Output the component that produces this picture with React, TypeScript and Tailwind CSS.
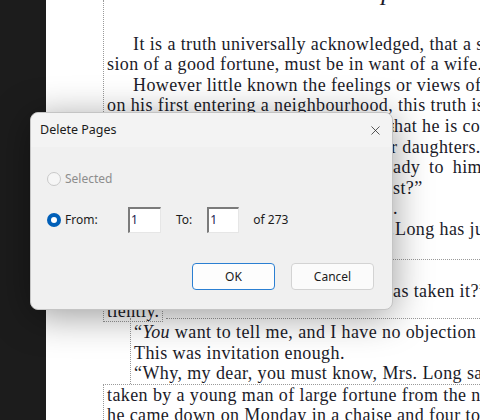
import { X } from "lucide-react";

const serif = "font-['Liberation_Serif',serif]";
const line = "h-[20.6px] leading-[20.6px] whitespace-nowrap";
const hid = "inline-block align-top overflow-hidden whitespace-nowrap";

function Radio(props: { checked?: boolean; disabled?: boolean }) {
  if (props.checked) {
    return (
      <span className="flex h-[14px] w-[14px] items-center justify-center rounded-full bg-[#005fb8]">
        <span className="h-[6px] w-[6px] rounded-full bg-white" />
      </span>
    );
  }
  return (
    <span
      className={
        "h-[14px] w-[14px] rounded-full border " +
        (props.disabled ? "border-[#c9c9c9] bg-[#f6f6f6]" : "border-[#8a8a8a] bg-white")
      }
    />
  );
}

function PageInput(props: { value: string; width: string }) {
  return (
    <div
      className={
        props.width +
        " h-[26px] border-t-2 border-l-2 border-r border-b border-t-[#7b7b7b] border-l-[#7b7b7b] border-r-[#e6e6e6] border-b-[#e6e6e6] bg-white pl-[1px] text-[12px] leading-[22px] text-[#1c2450]"
      }
    >
      {props.value}
    </div>
  );
}

function DeletePagesDialog() {
  return (
    <div className="absolute left-[30px] top-[112px] flex h-[198px] w-[363px] flex-col rounded-lg border border-[#c4c4c4] bg-[#f0f0f0] font-['Noto_Sans',sans-serif] text-[#1b1b1b] shadow-[0_6px_38px_rgba(0,0,0,0.4)]">
      <div className="flex h-[34px] items-center justify-between rounded-t-lg bg-[#f3f3f3] pl-[9px]">
        <span className="text-[12.5px]">Delete Pages</span>
        <button className="flex h-[34px] w-[34px] items-center justify-center text-[#222]">
          <X size={15} strokeWidth={1.2} />
        </button>
      </div>

      <div className="flex flex-col px-[16px] pt-[22px] text-[12px]">
        <div className="flex h-[20px] items-center gap-[4px] text-[#8d8d8d]">
          <Radio disabled />
          <span>Selected</span>
        </div>

        <div className="mt-[18px] flex h-[26px] items-center">
          <div className="flex w-[81px] items-center gap-[4px]">
            <Radio checked />
            <span>From:</span>
          </div>
          <PageInput value="1" width="w-[33px]" />
          <span className="ml-[15px]">To:</span>
          <div className="ml-[15px]">
            <PageInput value="1" width="w-[32px]" />
          </div>
          <span className="ml-[14px]">of 273</span>
        </div>

        <div className="mt-[30px] flex justify-end gap-[16px] pr-[2px]">
          <button className="h-[27px] w-[83px] rounded-[4px] border-[1.5px] border-[#2b7fd2] bg-[#fdfdfd] text-[12px]">
            OK
          </button>
          <button className="h-[27px] w-[83px] rounded-[4px] border border-[#d3d3d3] bg-[#fbfbfb] text-[12px]">
            Cancel
          </button>
        </div>
      </div>
    </div>
  );
}

function BookPage() {
  return (
    <div className={"flex-1 bg-white text-[18px] tracking-[0.4px] text-[#1b1b29] " + serif}>
      <div className="ml-[57px]">
        {/* paragraph block 1 */}
        <div className="border-l border-dotted border-[#9a9a9a] pl-[3px]">
          <div className="h-[33.7px] overflow-hidden">
            <div className="-mt-[23px] pl-[228px] text-[26px] italic leading-[30px] tracking-[1px]">Chapter 1</div>
          </div>
          <div className={line + " pl-[26px]"}>It is a truth universally acknowledged, that a single man in posses-</div>
          <div className={line}>sion of a good fortune, must be in want of a wife.</div>
          <div className={line + " pl-[26px]"}>However little known the feelings or views of such a man may be</div>
          <div className={line}>on his first entering a neighbourhood, this truth is so well fixed in the</div>
          <div className={line}>
            <span className={hid + " w-[287px]"}>minds of the surrounding families, that he is considered t</span>hat he is considered the rightful property
          </div>
          <div className={line}>
            <span className={hid + " w-[284px]"}>of some one or other of thei</span>r daughters.
          </div>
          <div className={line + " pl-[26px]"}>
            <span className={hid + " w-[260px]"}>“My dear Mr. Bennet,” said his l</span>
            <span className="[word-spacing:4px]">ady to him one day, “have you heard that</span>
          </div>
          <div className={line}>
            <span className={hid + " w-[286px]"}>Netherfield Park is let at la</span>st?”
          </div>
          <div className={line + " pl-[26px]"}>
            <span className={hid + " w-[260px]"}>Mr. Bennet replied that he had not</span>.
          </div>
          <div className={line + " pl-[26px]"}>
            <span className={hid + " w-[262px]"}>“But it is,” returned she; “for Mrs.</span>Long has just been here, and she
          </div>
          <div className={line}>told me all about it.”</div>
        </div>

        {/* paragraph block 2 */}
        <div className="-mt-px border-l border-t border-dotted border-[#9a9a9a] pl-[3px]">
          <div className={line + " pl-[26px]"}>Mr. Bennet made no answer.</div>
          <div className={line + " pl-[26px]"}>
            <span className={hid + " w-[260px]"}>“Do you not want to know who h</span>as taken it?” cried his wife impa-
          </div>
          <div className={line + " flex"}>
            <span className="-ml-[4px] border-b border-r border-dotted border-[#9a9a9a] pl-[4px] pr-[2px]">tiently.</span>
          </div>
        </div>

        {/* paragraph block 3 */}
        <div className="ml-[27px] border-l border-dotted border-[#9a9a9a] pl-[3px]">
          <div className="-mt-[4px] ml-[32px] border-t border-dotted border-[#9a9a9a]" />
          <div className={line + " mt-[3px]"}>
            “<span className="italic">You</span> want to tell me, and I have no objection to hearing it.”
          </div>
          <div className={line}>This was invitation enough.</div>
          <div className={line}>“Why, my dear, you must know, Mrs. Long says that Netherfield is</div>
        </div>

        {/* paragraph block 4 */}
        <div className="border-l border-t border-dotted border-[#9a9a9a] pl-[3px]">
          <div className={line}>taken by a young man of large fortune from the north of England; that</div>
          <div className={line}>he came down on Monday in a chaise and four to see the place, and was</div>
        </div>
      </div>
    </div>
  );
}

export default function App() {
  return (
    <div className="relative flex h-[420px] w-[480px] overflow-hidden bg-white">
      <div className="w-[46px] shrink-0 bg-[#1c1c1c]" />
      <BookPage />
      <DeletePagesDialog />
    </div>
  );
}
